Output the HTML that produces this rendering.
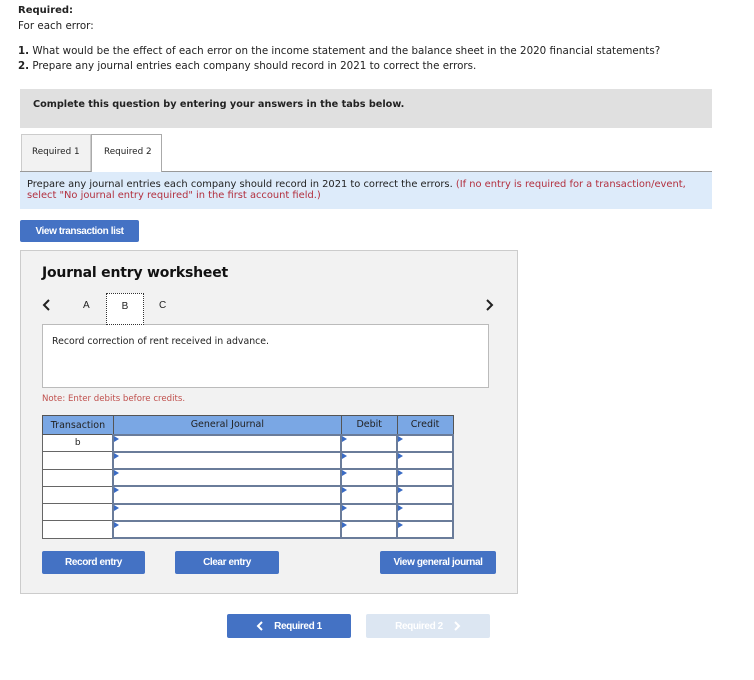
<!DOCTYPE html>
<html><head><meta charset="utf-8"><style>
*{margin:0;padding:0;box-sizing:border-box}
body{width:754px;height:680px;background:#fff;position:relative;font-family:"DejaVu Sans","Liberation Sans",sans-serif;color:#222;overflow:hidden}
.a{position:absolute;white-space:nowrap}
.t{font-size:10.3px;line-height:12px}
.btn{position:absolute;background:#4472c4;color:#fff;font-family:"Liberation Sans",sans-serif;font-weight:bold;font-size:10px;letter-spacing:-0.4px;display:flex;align-items:center;justify-content:center;border-radius:2px}
.v{font-size:9.2px}
table{border-collapse:collapse;position:absolute;left:42px;top:415px;width:412px}
td{border:1px solid #666;height:17.3px;padding:0;font-size:9px;text-align:center;background:#fff}
th{background:#7aa7e4;border:1px solid #555;height:19px;font-weight:normal;font-size:9.5px;color:#222;vertical-align:middle}
td.i{border:2px solid #6a7c9a;background:#fff;position:relative}
td.i::before{content:"";position:absolute;left:0;top:0;border-left:5px solid #3a6bc4;border-top:3px solid transparent;border-bottom:3px solid transparent}
</style></head><body>
<div class="a t" style="left:18px;top:5px;font-weight:bold;font-size:10px">Required:</div>
<div class="a t" style="left:18px;top:20px">For each error:</div>
<div class="a t" style="left:18px;top:45px"><b>1.</b> What would be the effect of each error on the income statement and the balance sheet in the 2020 financial statements?</div>
<div class="a t" style="left:18px;top:60px"><b>2.</b> Prepare any journal entries each company should record in 2021 to correct the errors.</div>
<div class="a" style="left:20px;top:89px;width:692px;height:39px;background:#e0e0e0"></div>
<div class="a" style="left:33px;top:99px;font-weight:bold;font-size:9.7px">Complete this question by entering your answers in the tabs below.</div>
<div class="a" style="left:21px;top:134px;width:70px;height:37px;background:#f2f2f2;border:1px solid #ccc;border-bottom:none"></div>
<div class="a v" style="left:32px;top:147px;font-size:8.8px">Required 1</div>
<div class="a" style="left:91px;top:134px;width:71px;height:38px;background:#fff;border:1px solid #aaa;border-bottom:none;z-index:2"></div>
<div class="a v" style="left:104px;top:147px;font-size:8.8px;z-index:3">Required 2</div>
<div class="a" style="left:20px;top:171px;width:692px;height:38px;background:#ddebfa;border-top:1px solid #999"></div>
<div class="a" style="left:27px;top:179px;line-height:11px;font-size:9.9px">Prepare any journal entries each company should record in 2021 to correct the errors. <span style="color:#b2303f">(If no entry is required for a transaction/event,</span><br><span style="color:#b2303f">select "No journal entry required" in the first account field.)</span></div>
<div class="btn" style="left:20px;top:220px;width:119px;height:22px">View transaction list</div>
<div class="a" style="left:20px;top:250px;width:498px;height:344px;background:#f2f2f2;border:1px solid #ccc"></div>
<div class="a" style="left:42px;top:265px;font-size:14px;font-weight:bold;color:#111;letter-spacing:-0.2px">Journal entry worksheet</div>
<svg class="a" style="left:42px;top:298px" width="10" height="14"><path d="M7 2 L2 7 L7 12" fill="none" stroke="#222" stroke-width="2"/></svg>
<svg class="a" style="left:484px;top:298px" width="10" height="14"><path d="M3 2 L8 7 L3 12" fill="none" stroke="#222" stroke-width="2"/></svg>
<div class="a" style="left:83px;top:300px;font-size:10px;font-family:'Liberation Sans'">A</div>
<div class="a" style="left:106px;top:293px;width:38px;height:32px;background:#fff;border:1px dotted #333;font-size:10px;font-family:'Liberation Sans';text-align:center;padding-top:7px;z-index:2">B</div>
<div class="a" style="left:159px;top:300px;font-size:10px;font-family:'Liberation Sans'">C</div>
<div class="a" style="left:42px;top:324px;width:447px;height:64px;background:#fff;border:1px solid #bbb"></div>
<div class="a" style="left:52px;top:336px;font-size:9.4px">Record correction of rent received in advance.</div>
<div class="a" style="left:42px;top:394px;font-size:8.6px;color:#c0504d">Note: Enter debits before credits.</div>
<table>
<tr><th style="width:71px">Transaction</th><th style="width:229px">General Journal</th><th style="width:56px">Debit</th><th style="width:56px">Credit</th></tr>
<tr><td>b</td><td class="i"></td><td class="i"></td><td class="i"></td></tr>
<tr><td></td><td class="i"></td><td class="i"></td><td class="i"></td></tr>
<tr><td></td><td class="i"></td><td class="i"></td><td class="i"></td></tr>
<tr><td></td><td class="i"></td><td class="i"></td><td class="i"></td></tr>
<tr><td></td><td class="i"></td><td class="i"></td><td class="i"></td></tr>
<tr><td></td><td class="i"></td><td class="i"></td><td class="i"></td></tr>
</table>
<div class="btn" style="left:42px;top:551px;width:103px;height:23px">Record entry</div>
<div class="btn" style="left:175px;top:551px;width:104px;height:23px">Clear entry</div>
<div class="btn" style="left:380px;top:551px;width:116px;height:23px">View general journal</div>
<div class="btn" style="left:227px;top:614px;width:124px;height:24px"><svg width="8" height="10" style="margin-right:10px"><path d="M6 1 L2 5 L6 9" fill="none" stroke="#fff" stroke-width="2"/></svg>Required 1</div>
<div class="btn" style="left:366px;top:614px;width:124px;height:24px;background:#dce6f2;color:#fff">Required 2<svg width="8" height="10" style="margin-left:10px"><path d="M2 1 L6 5 L2 9" fill="none" stroke="#fff" stroke-width="2"/></svg></div>
</body></html>
